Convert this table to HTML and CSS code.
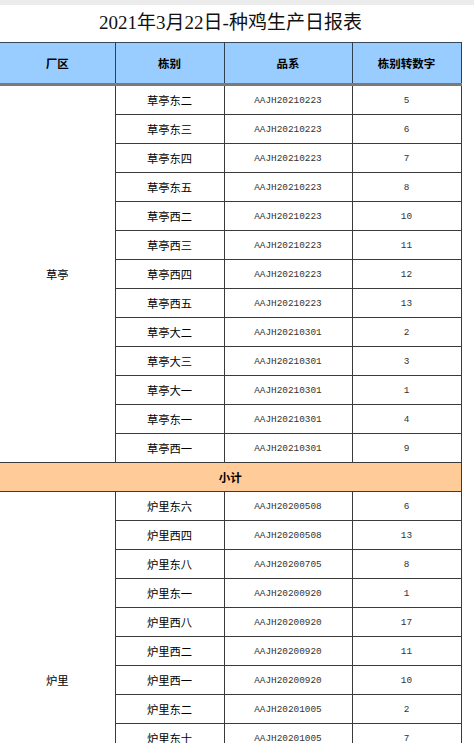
FILE: index.html
```html
<!DOCTYPE html>
<html lang="zh">
<head>
<meta charset="utf-8">
<title>种鸡生产日报表</title>
<link rel="stylesheet" href="styles.css">
</head>
<body>
<div class="topbar"></div>
<div class="report">
  <h1 class="title">2021年3月22日-种鸡生产日报表</h1>
  <table class="grid">
    <colgroup>
      <col class="c1"><col class="c2"><col class="c3"><col class="c4">
    </colgroup>
    <thead>
      <tr class="head">
        <th class="first">厂区</th><th>栋别</th><th>品系</th><th>栋别转数字</th>
      </tr>
    </thead>
    <tbody>
      <tr><td class="first area" rowspan="13">草亭</td><td class="name">草亭东二</td><td class="code">AAJH20210223</td><td class="num">5</td></tr>
      <tr><td class="name">草亭东三</td><td class="code">AAJH20210223</td><td class="num">6</td></tr>
      <tr><td class="name">草亭东四</td><td class="code">AAJH20210223</td><td class="num">7</td></tr>
      <tr><td class="name">草亭东五</td><td class="code">AAJH20210223</td><td class="num">8</td></tr>
      <tr><td class="name">草亭西二</td><td class="code">AAJH20210223</td><td class="num">10</td></tr>
      <tr><td class="name">草亭西三</td><td class="code">AAJH20210223</td><td class="num">11</td></tr>
      <tr><td class="name">草亭西四</td><td class="code">AAJH20210223</td><td class="num">12</td></tr>
      <tr><td class="name">草亭西五</td><td class="code">AAJH20210223</td><td class="num">13</td></tr>
      <tr><td class="name">草亭大二</td><td class="code">AAJH20210301</td><td class="num">2</td></tr>
      <tr><td class="name">草亭大三</td><td class="code">AAJH20210301</td><td class="num">3</td></tr>
      <tr><td class="name">草亭大一</td><td class="code">AAJH20210301</td><td class="num">1</td></tr>
      <tr><td class="name">草亭东一</td><td class="code">AAJH20210301</td><td class="num">4</td></tr>
      <tr><td class="name">草亭西一</td><td class="code">AAJH20210301</td><td class="num">9</td></tr>
      <tr class="subtotal"><td class="first" colspan="4">小计</td></tr>
      <tr><td class="first area" rowspan="13">炉里</td><td class="name">炉里东六</td><td class="code">AAJH20200508</td><td class="num">6</td></tr>
      <tr><td class="name">炉里西四</td><td class="code">AAJH20200508</td><td class="num">13</td></tr>
      <tr><td class="name">炉里东八</td><td class="code">AAJH20200705</td><td class="num">8</td></tr>
      <tr><td class="name">炉里东一</td><td class="code">AAJH20200920</td><td class="num">1</td></tr>
      <tr><td class="name">炉里西八</td><td class="code">AAJH20200920</td><td class="num">17</td></tr>
      <tr><td class="name">炉里西二</td><td class="code">AAJH20200920</td><td class="num">11</td></tr>
      <tr><td class="name">炉里西一</td><td class="code">AAJH20200920</td><td class="num">10</td></tr>
      <tr><td class="name">炉里东二</td><td class="code">AAJH20201005</td><td class="num">2</td></tr>
      <tr><td class="name">炉里东十</td><td class="code">AAJH20201005</td><td class="num">7</td></tr>
      <tr><td class="name">炉里东三</td><td class="code">AAJH20201005</td><td class="num">3</td></tr>
      <tr><td class="name">炉里东四</td><td class="code">AAJH20201005</td><td class="num">4</td></tr>
      <tr><td class="name">炉里东五</td><td class="code">AAJH20201005</td><td class="num">5</td></tr>
      <tr><td class="name">炉里西三</td><td class="code">AAJH20201005</td><td class="num">12</td></tr>
    </tbody>
  </table>
</div>
</body>
</html>
```

FILE: styles.css
```css
html, body {
  margin: 0;
  padding: 0;
  background: #ffffff;
}

body {
  font-family: "Liberation Sans", "Noto Sans CJK SC", sans-serif;
  color: #000;
}

.topbar {
  height: 5px;
  background: #ececec;
}

.report {
  width: 461px;
}

.title {
  margin: 0;
  height: 37px;
  line-height: 35px;
  text-align: center;
  font-family: "Liberation Serif", "Noto Sans CJK SC", serif;
  font-weight: normal;
  font-size: 19px;
  color: #111;
}

.grid {
  width: 461px;
  border-collapse: collapse;
  table-layout: fixed;
}

.c1 { width: 115px; }
.c2 { width: 109px; }
.c3 { width: 128px; }
.c4 { width: 109px; }

.grid th,
.grid td {
  border: 1px solid #3a3a3a;
  padding: 0;
  text-align: center;
  vertical-align: middle;
}

.grid .first {
  border-left: 0;
}

.head th {
  height: 40px;
  background: #99ccff;
  border-top: 1px solid #34495e;
  border-bottom: 3px solid #7a7a7a;
  border-left-color: #2f4050;
  border-right-color: #2f4050;
  font-family: "Noto Sans CJK SC", sans-serif;
  font-size: 11.5px;
  font-weight: bold;
}

.grid tbody td {
  height: 28px;
}

.name {
  font-family: "Noto Sans CJK SC", sans-serif;
  font-size: 11.3px;
}

.area {
  font-family: "Noto Sans CJK SC", sans-serif;
  font-size: 11.3px;
}

.code {
  font-family: "Liberation Mono", monospace;
  font-size: 9.4px;
  color: #333;
}

.num {
  font-family: "Liberation Mono", monospace;
  font-size: 9.4px;
  color: #333;
}

.subtotal td {
  background: #ffcc99;
  font-family: "Noto Sans CJK SC", sans-serif;
  font-size: 11.5px;
  font-weight: bold;
  border-top: 1px solid #3a3a3a;
  border-bottom: 1px solid #3a3a3a;
}
```
